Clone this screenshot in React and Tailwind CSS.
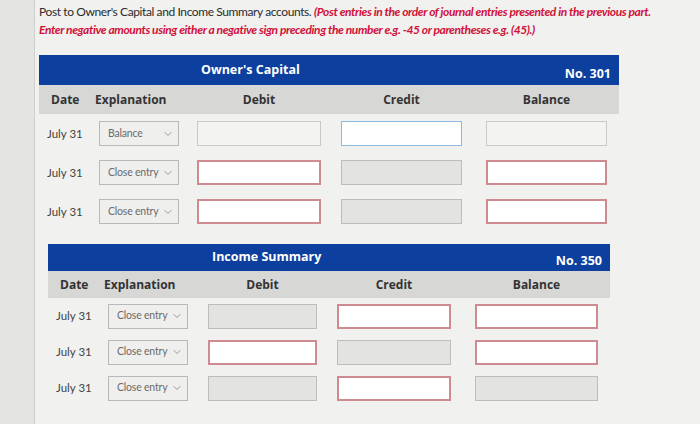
import React from 'react';
import { ChevronDown } from 'lucide-react';

const Select = ({ label }) => (
    <div className="flex items-center justify-between h-[25px] w-[80px] border border-[#b9b9b9] bg-[#efefee] pl-2 pr-1 font-['Lato',sans-serif] text-[10.5px] text-[#6b6b6b] whitespace-nowrap tracking-[-0.2px]">
        <span>{label}</span>
        <ChevronDown className="h-3 w-3 shrink-0 text-[#9a9a9a]" />
    </div>
);

const Box = ({ kind }) => {
    if (kind === 'red') return <div className="h-[25px] w-full border-2 border-[#cf8a92] bg-white" />;
    if (kind === 'blue') return <div className="h-[25px] w-full border border-[#8cb8e2] bg-white" />;
    if (kind === 'fill') return <div className="h-[25px] w-full border border-[#bdbdbd] bg-[#e3e3e2]" />;
    return <div className="h-[25px] w-full border border-[#c9c9c9] bg-[#f3f3f2]" />;
};

const Ledger = ({ title, no, rows, rowH, headH, subH, cols }) => (
    <div className="flex flex-col">
        <div className={`grid ${cols} items-center bg-[#0c3f9e] text-white font-bold text-[12.5px] ${headH}`}>
            <div />
            <div />
            <div className="pl-3">{title}</div>
            <div />
            <div className="text-right pr-2 pt-2">{no}</div>
        </div>
        <div className={`grid ${cols} items-center bg-[#d7d7d6] text-[#333] font-bold text-[12px] ${subH}`}>
            <div className="pl-3">Date</div>
            <div className="pl-1">Explanation</div>
            <div className="text-center">Debit</div>
            <div className="text-center">Credit</div>
            <div className="text-center">Balance</div>
        </div>
        {rows.map((r, i) => (
            <div key={i} className={`grid ${cols} items-center ${rowH}`}>
                <div className="pl-2 text-[11.5px] text-[#444] font-['Lato',sans-serif]">July 31</div>
                <div className="pl-2"><Select label={r[0]} /></div>
                <div className="px-2"><Box kind={r[1]} /></div>
                <div className="px-3"><Box kind={r[2]} /></div>
                <div className="px-3"><Box kind={r[3]} /></div>
            </div>
        ))}
    </div>
);

export default function App() {
    return (
        <div className="w-[700px] h-[424px] flex bg-[#f1f1ef] font-['Open_Sans',sans-serif] overflow-hidden">
            <div className="w-[35px] shrink-0 bg-[#e4e4e2] border-r border-[#cfcfcd]" />
            <div className="flex-1 flex flex-col pl-[4px]">
                <div className="pt-[3px] font-['Lato',sans-serif] text-[12px] leading-[18px] text-[#2b2b2b] tracking-[-0.4px]">
                    <p>
                        Post to Owner's Capital and Income Summary accounts.{' '}
                        <span className="text-[#d0103a] font-bold italic">(Post entries in the order of journal entries presented in the previous part.</span>
                    </p>
                    <p className="text-[#d0103a] font-bold italic">
                        Enter negative amounts using either a negative sign preceding the number e.g. -45 or parentheses e.g. (45).)
                    </p>
                </div>
                <div className="mt-[16px] w-[580px]">
                    <Ledger
                        title="Owner's Capital"
                        no="No. 301"
                        headH="h-[30px]"
                        subH="h-[29px]"
                        rowH="h-[39px]"
                        cols="grid-cols-[52px_98px_140px_145px_145px]"
                        rows={[
                            ['Balance', 'plain', 'blue', 'plain'],
                            ['Close entry', 'red', 'fill', 'red'],
                            ['Close entry', 'red', 'fill', 'red'],
                        ]}
                    />
                </div>
                <div className="mt-[13px] ml-[9px] w-[562px]">
                    <Ledger
                        title="Income Summary"
                        no="No. 350"
                        headH="h-[27px]"
                        subH="h-[27px]"
                        rowH="h-[36px]"
                        cols="grid-cols-[52px_100px_125px_138px_147px]"
                        rows={[
                            ['Close entry', 'fill', 'red', 'red'],
                            ['Close entry', 'red', 'fill', 'red'],
                            ['Close entry', 'fill', 'red', 'fill'],
                        ]}
                    />
                </div>
            </div>
        </div>
    );
}
